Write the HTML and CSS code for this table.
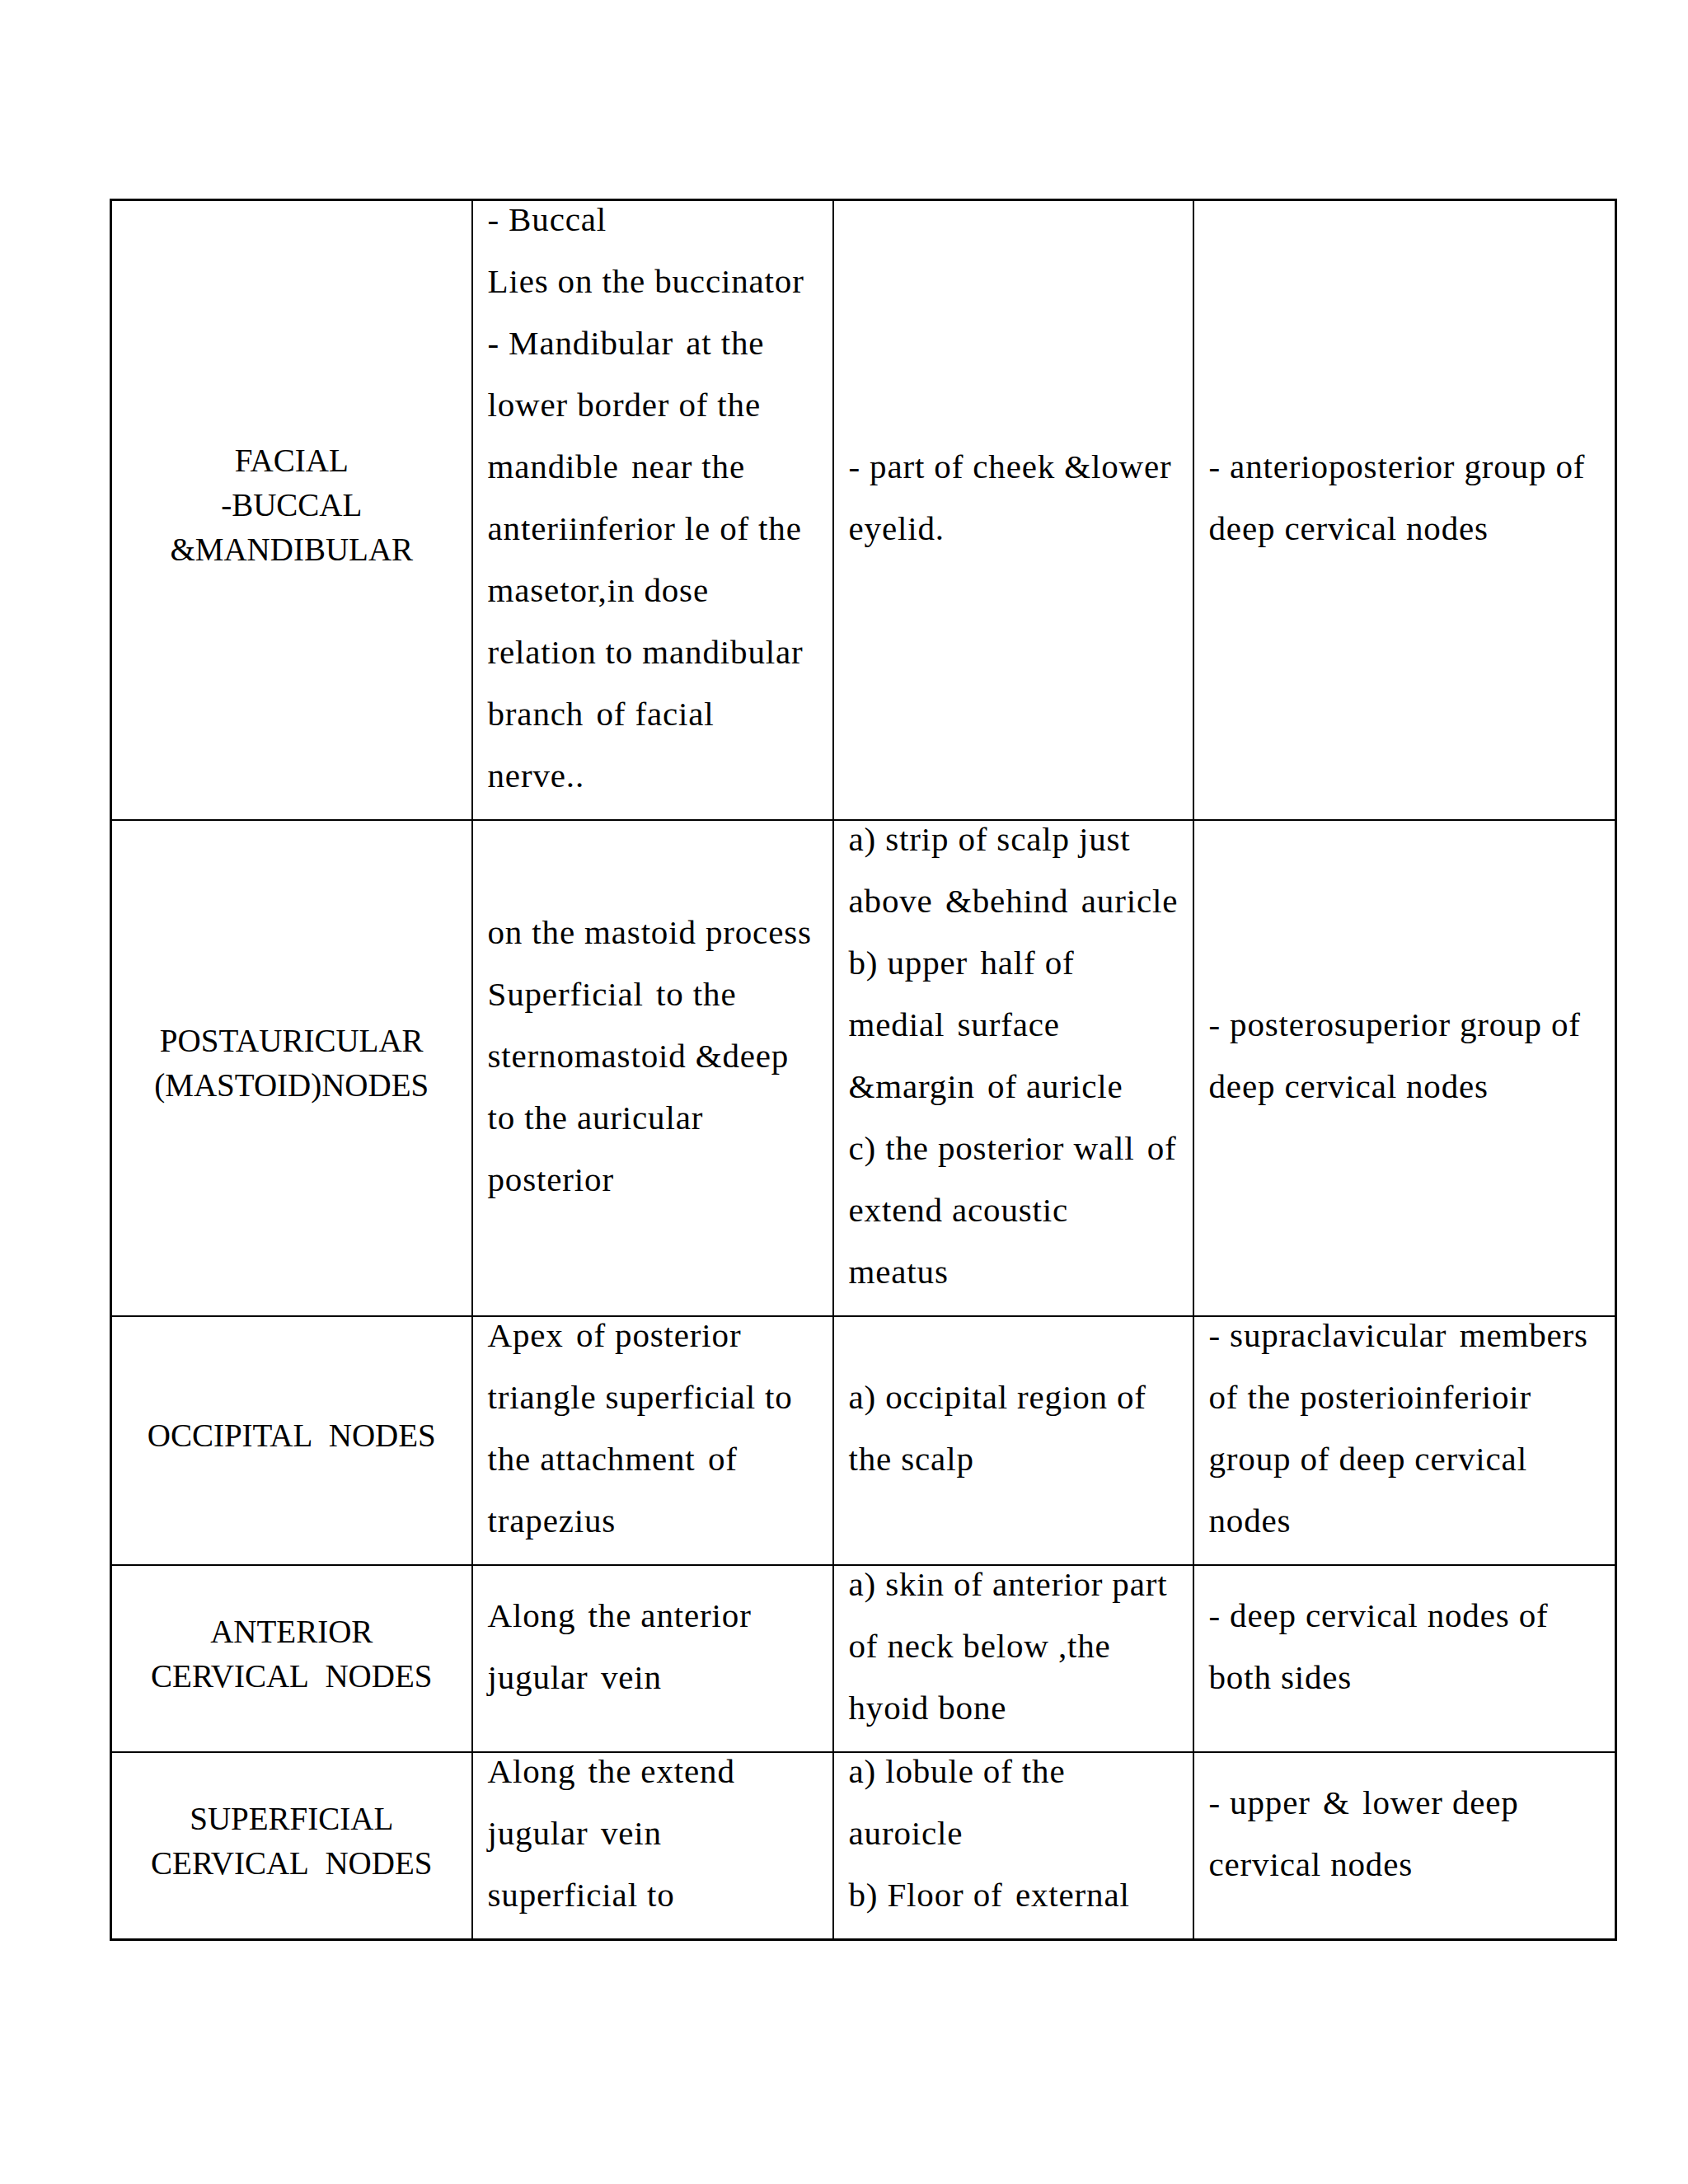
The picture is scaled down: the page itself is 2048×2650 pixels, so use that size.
FILE: index.html
```html
<!DOCTYPE html>
<html lang="en">
<head>
<meta charset="utf-8">
<title>Lymph nodes of head and neck</title>
<link rel="stylesheet" href="styles.css">
</head>
<body>
<div class="page">
<table class="nodes">
<colgroup>
<col class="c1"><col class="c2"><col class="c3"><col class="c4">
</colgroup>
<tr class="r1">
<td class="name"><div class="nm">FACIAL<br>-BUCCAL<br>&amp;MANDIBULAR</div></td>
<td><div class="tx">- Buccal<br>Lies on the buccinator<br>- Mandibular &#8202;at the<br>lower border of the<br>mandible &#8202;near the<br>anteriinferior le of the<br>masetor,in dose<br>relation to mandibular<br>branch &#8202;of facial<br>nerve..</div></td>
<td><div class="tx">- part of cheek &amp;lower<br>eyelid.</div></td>
<td><div class="tx">- anterioposterior group of<br>deep cervical nodes</div></td>
</tr>
<tr class="r2">
<td class="name"><div class="nm">POSTAURICULAR<br>(MASTOID)NODES</div></td>
<td><div class="tx">on the mastoid process<br>Superficial &#8202;to the<br>sternomastoid &amp;deep<br>to the auricular<br>posterior</div></td>
<td><div class="tx">a) strip of scalp just<br>above &#8202;&amp;behind &#8202;auricle<br>b) upper &#8202;half of<br>medial &#8202;surface<br>&amp;margin &#8202;of auricle<br>c) the posterior wall &#8202;of<br>extend acoustic<br>meatus</div></td>
<td><div class="tx">- posterosuperior group of<br>deep cervical nodes</div></td>
</tr>
<tr class="r3">
<td class="name"><div class="nm">OCCIPITAL&nbsp; NODES</div></td>
<td><div class="tx">Apex &#8202;of posterior<br>triangle superficial to<br>the attachment &#8202;of<br>trapezius</div></td>
<td><div class="tx">a) occipital region of<br>the scalp</div></td>
<td><div class="tx">- supraclavicular &#8202;members<br>of the posterioinferioir<br>group of deep cervical<br>nodes</div></td>
</tr>
<tr class="r4">
<td class="name"><div class="nm">ANTERIOR<br>CERVICAL&nbsp; NODES</div></td>
<td><div class="tx">Along &#8202;the anterior<br>jugular &#8202;vein</div></td>
<td><div class="tx">a) skin of anterior part<br>of neck below ,the<br>hyoid bone</div></td>
<td><div class="tx">- deep cervical nodes of<br>both sides</div></td>
</tr>
<tr class="r5">
<td class="name"><div class="nm">SUPERFICIAL<br>CERVICAL&nbsp; NODES</div></td>
<td><div class="tx">Along &#8202;the extend<br>jugular &#8202;vein<br>superficial to</div></td>
<td><div class="tx">a) lobule of the<br>auroicle<br>b) Floor of &#8202;external</div></td>
<td><div class="tx">- upper &#8202;&amp; &#8202;lower deep<br>cervical nodes</div></td>
</tr>
</table>
</div>
</body>
</html>
```

FILE: styles.css
```css
html, body {
  margin: 0;
  padding: 0;
  background: #ffffff;
}

body {
  font-family: "Liberation Serif", "Times New Roman", serif;
  color: #000000;
  width: 2048px;
  min-height: 2650px;
}

.page {
  padding: 241px 0 0 133px;
}

.nodes {
  border-collapse: collapse;
  table-layout: fixed;
  width: 1826px;
  border: 3px solid #000;
  font-size: 41px;
}

.c1 { width: 438px; }
.c2 { width: 438px; }
.c3 { width: 437px; }
.c4 { width: 513px; }

.nodes td {
  border: 2px solid #000;
  padding: 0 4px 0 18px;
  vertical-align: middle;
  white-space: nowrap;
  overflow: hidden;
}

.nodes td.name {
  padding: 0 4px;
  text-align: center;
  font-size: 39px;
}

.tx {
  line-height: 75px;
  letter-spacing: 0.85px;
  margin: -15px 0 15px;
}

.nm {
  line-height: 54px;
  margin: -6px 0 6px;
}
```
